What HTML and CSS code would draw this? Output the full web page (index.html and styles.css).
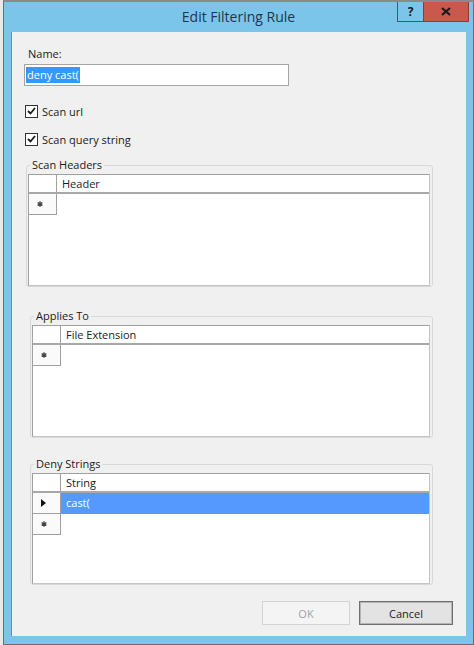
FILE: index.html
```html
<!DOCTYPE html>
<html>
<head>
<meta charset="utf-8">
<link rel="stylesheet" href="styles.css">
</head>
<body>
<div class="window">
  <div class="titlebar">
    <div class="title">Edit Filtering Rule</div>
    <div class="caption-btns">
      <div class="cbtn help">?</div>
      <div class="cbtn close">
        <svg width="10" height="9" viewBox="0 0 10 9"><path d="M1 1 L9 8 M9 1 L1 8" stroke="#1a1a1a" stroke-width="2.2"/></svg>
      </div>
    </div>
  </div>
  <div class="client">
    <div class="lbl name-lbl">Name:</div>
    <div class="textbox"><span class="sel">deny cast(</span></div>

    <div class="check first"><span class="cb"><svg width="9" height="8" viewBox="0 0 9 8"><path d="M1 4 L3.5 6.5 L8 1" fill="none" stroke="#1a1a1a" stroke-width="1.8"/></svg></span><span>Scan url</span></div>
    <div class="check second"><span class="cb"><svg width="9" height="8" viewBox="0 0 9 8"><path d="M1 4 L3.5 6.5 L8 1" fill="none" stroke="#1a1a1a" stroke-width="1.8"/></svg></span><span>Scan query string</span></div>

    <fieldset class="group g1">
      <legend>Scan Headers</legend>
      <div class="grid h1">
        <div class="row head"><div class="rh"></div><div class="cell">Header</div></div>
        <div class="row"><div class="rh"><svg class="star" width="6" height="6" viewBox="0 0 6 6"><path d="M3 0.3 V5.7 M0.6 1.6 L5.4 4.4 M5.4 1.6 L0.6 4.4" stroke="#444" stroke-width="1.3"/></svg></div><div class="cell"></div></div>
      </div>
    </fieldset>

    <fieldset class="group g2">
      <legend>Applies To</legend>
      <div class="grid h2">
        <div class="row head"><div class="rh"></div><div class="cell">File Extension</div></div>
        <div class="row"><div class="rh"><svg class="star" width="6" height="6" viewBox="0 0 6 6"><path d="M3 0.3 V5.7 M0.6 1.6 L5.4 4.4 M5.4 1.6 L0.6 4.4" stroke="#444" stroke-width="1.3"/></svg></div><div class="cell"></div></div>
      </div>
    </fieldset>

    <fieldset class="group g3">
      <legend>Deny Strings</legend>
      <div class="grid h3">
        <div class="row head"><div class="rh"></div><div class="cell">String</div></div>
        <div class="row selected"><div class="rh"><span class="tri"></span></div><div class="cell">cast(</div></div>
        <div class="row"><div class="rh"><svg class="star" width="6" height="6" viewBox="0 0 6 6"><path d="M3 0.3 V5.7 M0.6 1.6 L5.4 4.4 M5.4 1.6 L0.6 4.4" stroke="#444" stroke-width="1.3"/></svg></div><div class="cell"></div></div>
      </div>
    </fieldset>

    <div class="buttons">
      <div class="btn ok">OK</div>
      <div class="btn cancel">Cancel</div>
    </div>
  </div>
</div>
</body>
</html>
```

FILE: styles.css
```css
* { box-sizing: border-box; }
html, body { margin: 0; padding: 0; }
body {
  background: #e9e9e9;
  width: 474px;
  height: 645px;
  overflow: hidden;
  font-family: "Open Sans", "Noto Sans", sans-serif;
  font-size: 11px;
  color: #1b1b1b;
}
.window {
  margin-left: 3px;
  width: 471px;
  height: 645px;
  border: 1px solid #6d6d6d;
  border-top: 2px solid #8a8a8a;
  background: #7cc5ea;
  display: flex;
  flex-direction: column;
  padding: 0 7px 8px 7px;
}
.titlebar {
  height: 30px;
  margin: 0 -7px;
  display: grid;
  grid-template-columns: 1fr auto 1fr;
  align-items: start;
}
.title {
  grid-column: 2;
  font-size: 14px;
  line-height: 30px;
  color: #1c3650;
}
.caption-btns {
  grid-column: 3;
  justify-self: end;
  display: flex;
  margin-right: 4px;
}
.cbtn {
  height: 20px;
  display: flex;
  align-items: center;
  justify-content: center;
}
.help {
  width: 27px;
  border: 1px solid #3d5a72;
  border-top: none;
  font-weight: bold;
  font-size: 12px;
  color: #1a1a1a;
}
.close {
  width: 45px;
  background: #c8594c;
  border-bottom: 1px solid #8f3b33;
  border-right: 1px solid #8f3b33;
}
.client {
  flex: 1;
  background: #f0f0f0;
  border-left: 1px solid #5f8fb0;
  padding: 0 13px 0 16px;
  display: flex;
  flex-direction: column;
  align-items: flex-start;
}
.lbl { line-height: 15px; }
.name-lbl { margin-top: 14px; }
.textbox {
  margin-top: 3px;
  margin-left: -4px;
  width: 265px;
  height: 22px;
  border: 1px solid #a5a5a5;
  background: #fff;
  padding: 2px 1px;
  display: flex;
}
.sel {
  background: #3399ff;
  color: #fff;
  line-height: 16px;
  padding: 0 1px;
}
.check {
  display: flex;
  align-items: center;
  height: 16px;
  margin-left: -3px;
}
.check.first { margin-top: 17px; }
.check.second { margin-top: 12px; }
.cb {
  width: 13px;
  height: 13px;
  border: 1px solid #333;
  background: #fff;
  display: flex;
  align-items: center;
  justify-content: center;
  margin-right: 4px;
}
.group {
  margin: 0;
  padding: 0 2px 0 1px;
  border: 1px solid #d8d8d8;
  border-radius: 3px;
  min-width: 0;
}
.group legend {
  padding: 0 2px;
  margin-left: 2px;
  line-height: 16px;
  font-size: 11px;
}
.g1 { margin-top: 10px; margin-left: -2px; width: 407px; }
.g2 { margin-top: 21px; margin-left: 2px; width: 403px; }
.g3 { margin-top: 18px; margin-left: 2px; width: 403px; }
.grid {
  margin-top: 1px;
  background: #fff;
  border: 1px solid #c4c4c4;
  border-top-color: #a0a0a0;
  border-left-color: #a0a0a0;
}
.h1 { height: 112px; }
.h2 { height: 112px; }
.h3 { height: 111px; }
.row {
  display: flex;
  height: 21px;
}
.row.head {
  height: 19px;
  border-bottom: 2px solid #a8a8a8;
}
.rh {
  width: 28px;
  flex: none;
  border-right: 1px solid #a0a0a0;
  border-bottom: 1px solid #a0a0a0;
  background: #fafafa;
  display: flex;
  align-items: center;
  justify-content: flex-start;
  padding-left: 8px;
}
.row.head .rh { border-bottom: none; background: #fff; }
.cell {
  flex: 1;
  padding-left: 5px;
  line-height: 17px;
}
.row.selected .cell {
  background: #5599fe;
  color: #fff;
  line-height: 20px;
}
.tri {
  width: 0;
  height: 0;
  border-top: 4px solid transparent;
  border-bottom: 4px solid transparent;
  border-left: 5px solid #111;
}
.buttons {
  margin-top: 16px;
  align-self: stretch;
  display: flex;
  justify-content: flex-end;
  gap: 9px;
}
.btn {
  height: 24px;
  display: flex;
  align-items: center;
  justify-content: center;
}
.ok {
  width: 88px;
  border: 1px solid #d3d3d3;
  background: #f4f4f4;
  color: #a3a3a3;
}
.cancel {
  width: 94px;
  border: 1px solid #6f6f6f;
  background: #e3e3e3;
  box-shadow: inset 0 0 0 1px #b5b5b5;
}
```
